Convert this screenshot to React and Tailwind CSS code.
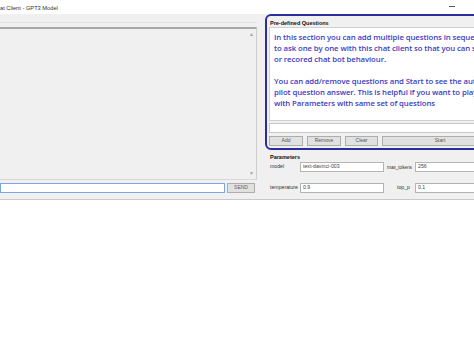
import React from "react";

const ui = { fontFamily: '"Liberation Sans", Arial, sans-serif' };
const blue = { fontFamily: '"Open Sans", "Liberation Sans", sans-serif' };

const lineasAyuda = [
    "In this section you can add multiple questions in sequence",
    "to ask one by one with this chat client so that you can see",
    "or recored chat bot behaviour.",
    "",
    "You can add/remove questions and Start to see the auto",
    "pilot question answer. This is helpful if you want to play",
    "with Parameters with same set of questions",
];

const Boton = ({ children, className = "" }) => (
    <div
        className={`h-[10px] border border-[#adadad] bg-[#e1e1e1] flex items-center justify-center text-[5px] text-[#555] ${className}`}
    >
        {children}
    </div>
);

const Campo = ({ value, className = "" }) => (
    <div
        className={`h-[10px] border border-[#b4b4b4] bg-white flex items-center px-[2px] text-[5.2px] text-[#444] ${className}`}
    >
        {value}
    </div>
);

export default function App() {
    return (
        <div className="w-[474px] h-[355px] overflow-hidden bg-white" style={ui}>
            <div className="w-[540px] flex flex-col">
                {/* Barra de título */}
                <div className="h-[14px] bg-white flex items-center relative">
                    <span className="text-[5.7px] text-[#333] pt-[2px]">at Client - GPT3 Model</span>
                    <span className="absolute left-[449px] top-[6px] w-[6px] h-px bg-[#555]" />
                </div>

                {/* Área cliente */}
                <div className="h-[186px] bg-[#f0f0f0] border-b border-[#c8c8c8] flex">
                    {/* Columna del chat */}
                    <div className="w-[257px] flex flex-col">
                        <div className="h-[13px] flex flex-col">
                            <div className="h-[8px]" />
                            <div className="h-px bg-[#e2e2e2]" />
                        </div>
                        <div className="h-[153px] border-t-2 border-r border-l-0 border-b border-t-[#a8a8a8] border-r-[#cfcfcf] border-b-[#d8d8d8] bg-[#f0f0f0] flex justify-end">
                            <div className="w-[9px] flex flex-col justify-between items-center py-[3px]">
                                <span className="text-[5px] leading-none text-[#a0a0a0]">▲</span>
                                <span className="text-[5px] leading-none text-[#a0a0a0]">▼</span>
                            </div>
                        </div>
                        <div className="mt-[3px] flex gap-[2px]">
                            <div className="w-[225px] h-[10px] border border-[#7aa7d8] bg-white" />
                            <Boton className="w-[28px] text-[#666]">SEND</Boton>
                        </div>
                    </div>

                    {/* Columna derecha */}
                    <div className="ml-[8px] w-[275px] flex flex-col">
                        <div className="h-[136px] border-2 border-[#2d2da0] rounded-[6px] px-[2px] flex flex-col">
                            <div className="h-[11px] flex items-center text-[5.5px] font-bold text-[#111] pl-[1px] pt-[3px]">
                                Pre-defined Questions
                            </div>
                            <div
                                className="h-[94px] bg-white border border-[#d0d0d0] pl-[4px] pt-[4px] text-[7.8px] tracking-[-0.1px] font-semibold leading-[11px] text-[#3c3cc4] whitespace-nowrap"
                                style={blue}
                            >
                                {lineasAyuda.map((l, i) => (
                                    <div key={i} className="h-[11px]">{l}</div>
                                ))}
                            </div>
                            <div className="mt-[2px] h-[10px] bg-white border border-[#c8c8c8]" />
                            <div className="mt-[3px] flex gap-[4px]">
                                <Boton className="w-[34px]">Add</Boton>
                                <Boton className="w-[34px]">Remove</Boton>
                                <Boton className="w-[33px]">Clear</Boton>
                                <Boton className="w-[116px]">Start</Boton>
                            </div>
                        </div>

                        <div className="mt-[3px] text-[5.5px] font-bold text-[#111] pl-[5px]">Parameters</div>
                        <div className="mt-px flex items-center text-[5.2px] text-[#333]">
                            <span className="w-[35px] pl-[5px]">model</span>
                            <Campo value="text-davinci-003" className="w-[84px]" />
                            <span className="w-[31px] pl-[3px] whitespace-nowrap text-[4.8px] tracking-[-0.1px]">max_tokens</span>
                            <Campo value="256" className="w-[90px]" />
                        </div>
                        <div className="mt-[11px] flex items-center text-[5.2px] text-[#333]">
                            <span className="w-[35px] pl-[5px]">temperature</span>
                            <Campo value="0.9" className="w-[84px]" />
                            <span className="w-[31px] pl-[13px]">top_p</span>
                            <Campo value="0.1" className="w-[90px]" />
                        </div>
                    </div>
                </div>
            </div>
        </div>
    );
}
